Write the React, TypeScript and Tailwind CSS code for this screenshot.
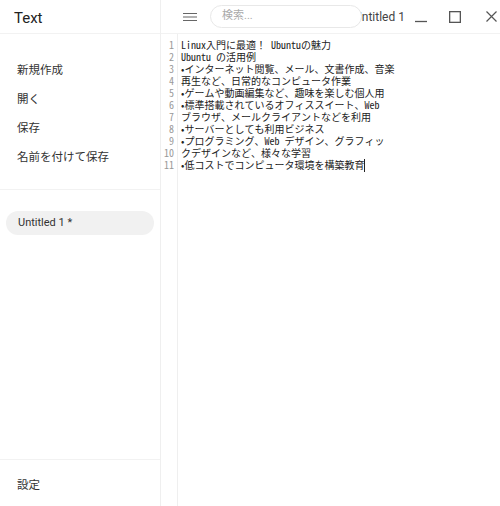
import React from 'react';

const lines = [
  'Linux入門に最適！ Ubuntuの魅力',
  'Ubuntu の活用例',
  '•インターネット閲覧、メール、文書作成、音楽',
  '再生など、日常的なコンピュータ作業',
  '•ゲームや動画編集など、趣味を楽しむ個人用',
  '•標準搭載されているオフィススイート、Web',
  'ブラウザ、メールクライアントなどを利用',
  '•サーバーとしても利用ビジネス',
  '•プログラミング、Web デザイン、グラフィッ',
  'クデザインなど、様々な学習',
  '•低コストでコンピュータ環境を構築教育',
];

const menuItems = ['新規作成', '開く', '保存', '名前を付けて保存'];

const uiFont = "font-['Roboto','Noto_Sans_CJK_JP',sans-serif]";
const monoFont = "font-['Noto_Sans_Mono_CJK_JP','Noto_Sans_CJK_JP',monospace]";

const Sidebar: React.FC = () => (
  <aside className="w-[161px] shrink-0 h-full flex flex-col border-r border-[#efefef]">
    <div className="h-[34px] shrink-0 border-b border-[#f2f2f2] flex items-center pl-[14px] pt-[3px]">
      <span className="text-[15px] text-[#222]">Text</span>
    </div>

    <nav className="pt-[22px] pb-[17px] border-b border-[#f2f2f2]">
      {menuItems.map((item) => (
        <div key={item} className="h-[29px] flex items-center pl-[17px] text-[11.5px] text-[#333]">
          {item}
        </div>
      ))}
    </nav>

    <div className="flex-1 pt-[21px] px-[6px]">
      <div className="h-[24px] rounded-full bg-[#f1f1f1] flex items-center pl-[12px] text-[11px] text-[#333]">
        Untitled 1 *
      </div>
    </div>

    <div className="h-[47px] shrink-0 border-t border-[#f2f2f2] flex items-center pl-[17px] pt-[5px] text-[11.5px] text-[#333]">
      設定
    </div>
  </aside>
);

const Header: React.FC = () => (
  <header className="h-[34px] shrink-0 border-b border-[#f2f2f2] flex items-center pl-[22px] pr-[3px]">
    <svg width="14" height="10" viewBox="0 0 14 10" className="shrink-0">
      <path d="M0 1.5h14M0 5h14M0 8.5h14" stroke="#666" strokeWidth="1.2" />
    </svg>
    <div className="relative z-10 ml-[13px] h-[23px] w-[152px] shrink-0 rounded-full border border-[#e8e8e8] bg-white flex items-center pl-[11px] text-[11px] text-[#aaa]">
      検索...
    </div>
    <span className="-ml-[8px] text-[12px] text-[#444] whitespace-nowrap">Untitled 1</span>

    <div className="ml-auto flex items-center">
      <svg width="12" height="12" viewBox="0 0 12 12">
        <path d="M0 10.5h12" stroke="#555" strokeWidth="1.3" />
      </svg>
      <svg width="12" height="12" viewBox="0 0 12 12" className="ml-[22px]">
        <rect x="0.65" y="0.65" width="10.7" height="10.7" fill="none" stroke="#555" strokeWidth="1.3" />
      </svg>
      <svg width="11" height="11" viewBox="0 0 11 11" className="ml-[25px]">
        <path d="M0.5 0.5l10 10M10.5 0.5l-10 10" stroke="#555" strokeWidth="1.2" />
      </svg>
    </div>
  </header>
);

const Editor: React.FC = () => (
  <div className={`flex-1 flex ${monoFont} text-[10px] leading-[12px]`}>
    <div className="w-[17px] shrink-0 border-r border-[#efefef] pt-[5px] pr-[3px] text-right text-[#999]">
      {lines.map((_, i) => (
        <div key={i} className="h-[12px]">
          {i + 1}
        </div>
      ))}
    </div>
    <div className="flex-1 pt-[5px] pl-[3px] text-[#222]">
      {lines.map((line, i) => (
        <div key={i} className="h-[12px] whitespace-pre flex items-center">
          <span>{line}</span>
          {i === lines.length - 1 && <span className="inline-block w-px h-[13px] bg-[#222]" />}
        </div>
      ))}
    </div>
  </div>
);

export default function App() {
  return (
    <div className={`w-full h-screen flex bg-white ${uiFont}`}>
      <Sidebar />
      <main className="flex-1 min-w-0 flex flex-col">
        <Header />
        <Editor />
      </main>
    </div>
  );
}
